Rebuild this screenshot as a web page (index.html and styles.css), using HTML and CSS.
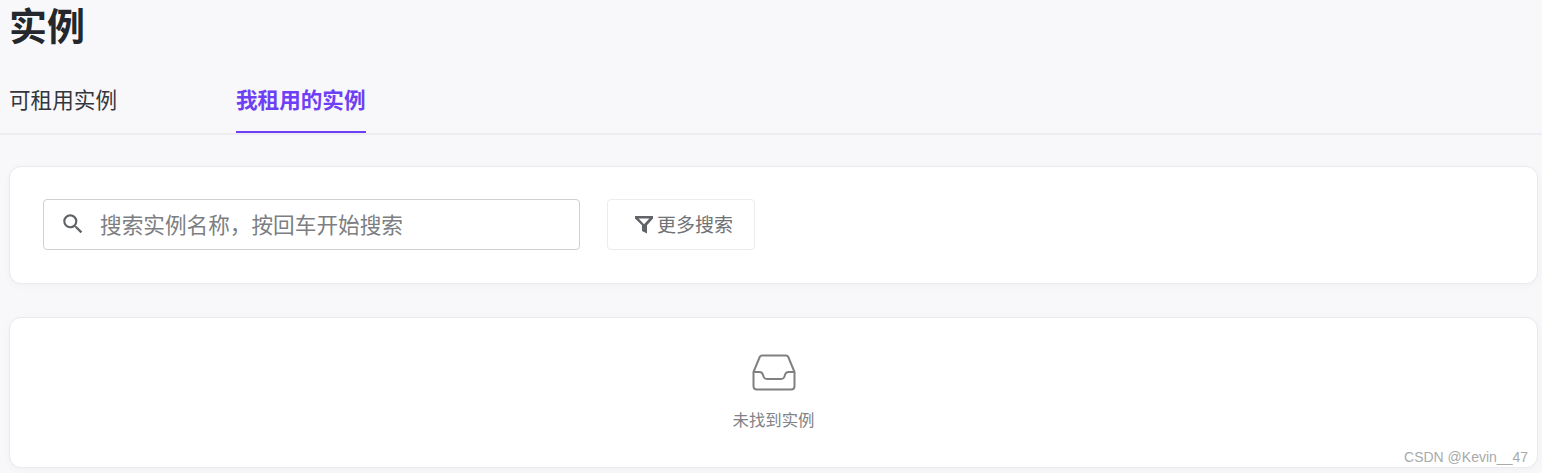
FILE: index.html
```html
<!DOCTYPE html>
<html lang="zh-CN">
  <head>
    <meta charset="UTF-8" />
    <title>实例</title>
    <link rel="stylesheet" href="styles.css">
  </head>
  <body>
    <h1 class="title">实例</h1>
    <div class="tabs">
      <a class="tab">可租用实例</a>
      <a class="tab active">我租用的实例</a>
    </div>
    <div class="card search">
      <div class="searchBox">
        <svg class="searchIcon" viewBox="0 0 24 24"><path d="M15.5 14h-.79l-.28-.27A6.47 6.47 0 0 0 16 9.5 6.5 6.5 0 1 0 9.500 16c1.610 0 3.090-.59 4.230-1.570l.27.28v.79l5 4.990L20.490 19l-4.990-5zm-6 0C7.010 14 5 11.990 5 9.500S7.010 5 9.500 5 14 7.010 14 9.500 11.990 14 9.500 14z"/></svg>
        <span class="placeholder">搜索实例名称，按回车开始搜索</span>
      </div>
      <div class="moreBtn">
        <svg class="filterIcon" viewBox="0 0 18 18"><path fill-rule="evenodd" d="M0 0.500h18v2.600l-6 6.600V18l-5-2.500V9.700L0 3.100z M3.600 2.900l5.400 5.900 5.400-5.900z"/></svg>
        <span>更多搜索</span>
      </div>
    </div>
    <div class="card empty">
      <svg class="emptyIcon" viewBox="0 0 44 38"><path d="M10 1.500h24q1.500 0 2.200 1.300L42.500 18v14q0 3.500-3.500 3.500H5q-3.500 0-3.500-3.500V18L7.800 2.800Q8.500 1.500 10 1.500z M1.500 18h6q2.500 0 3.300 2.300l.9 2.700q.7 2 3 2h14.600q2.300 0 3-2l.9-2.700q.8-2.300 3.300-2.300h6"/></svg>
      <p class="emptyText">未找到实例</p>
      <span class="mark">CSDN @Kevin__47</span>
    </div>
  </body>
</html>
```

FILE: styles.css
```css
* {
  margin: 0;
  padding: 0;
  box-sizing: border-box;
}
body {
  height: 473px;
  overflow: hidden;
  background-color: #f8f8fb;
  font-family: "Liberation Sans", "Noto Sans CJK SC", sans-serif;
}
/*标题*/
.title {
  padding: 2px 0 0 9px;
  height: 70px;
  font-size: 38px;
  line-height: 50px;
  font-weight: 700;
  color: #24272b;
}
/*标签栏*/
.tabs {
  display: flex;
  gap: 119px;
  height: 65px;
  padding-left: 9px;
  border-bottom: 2px solid #ececf1;
}
.tab {
  height: 63px;
  font-size: 21.6px;
  line-height: 62px;
  color: #33363a;
}
.tab.active {
  font-weight: 700;
  color: #6f3ff5;
  border-bottom: 2px solid #6f3ff5;
}
/*卡片*/
.card {
  margin: 0 4px 0 9px;
  background-color: #fff;
  border: 1px solid #e9e9ee;
  border-radius: 12px;
  box-shadow: 0 2px 8px rgba(0, 0, 0, 0.03);
}
.search {
  display: flex;
  align-items: center;
  gap: 27px;
  margin-top: 31px;
  height: 118px;
  padding: 0 0 2px 33px;
}
.searchBox {
  display: flex;
  align-items: center;
  width: 537px;
  height: 51px;
  padding-left: 16px;
  border: 1px solid #cfd0d4;
  border-radius: 4px;
}
.searchIcon {
  width: 26px;
  height: 26px;
  fill: #5f6266;
}
.placeholder {
  margin-left: 14px;
  padding-bottom: 2px;
  font-size: 21.65px;
  color: #7c7e82;
}
.moreBtn {
  display: flex;
  align-items: center;
  justify-content: center;
  gap: 4px;
  width: 148px;
  height: 51px;
  padding-left: 6px;
  border: 1px solid #ececf0;
  border-radius: 4px;
  font-size: 19px;
  color: #707276;
}
.moreBtn span {
  padding-bottom: 2px;
}
.filterIcon {
  width: 18px;
  height: 19px;
  fill: #606367;
}
/*空状态*/
.empty {
  position: relative;
  display: flex;
  flex-direction: column;
  align-items: center;
  margin-top: 33px;
  height: 151px;
  padding-top: 36px;
}
.emptyIcon {
  width: 44px;
  height: 38px;
  fill: none;
  stroke: #808080;
  stroke-width: 2;
}
.emptyText {
  margin-top: 17px;
  font-size: 16.4px;
  line-height: 22px;
  color: #808285;
}
.mark {
  position: absolute;
  right: 9px;
  bottom: 0;
  font-size: 14px;
  line-height: 20px;
  color: #a9a9a9;
}
```
